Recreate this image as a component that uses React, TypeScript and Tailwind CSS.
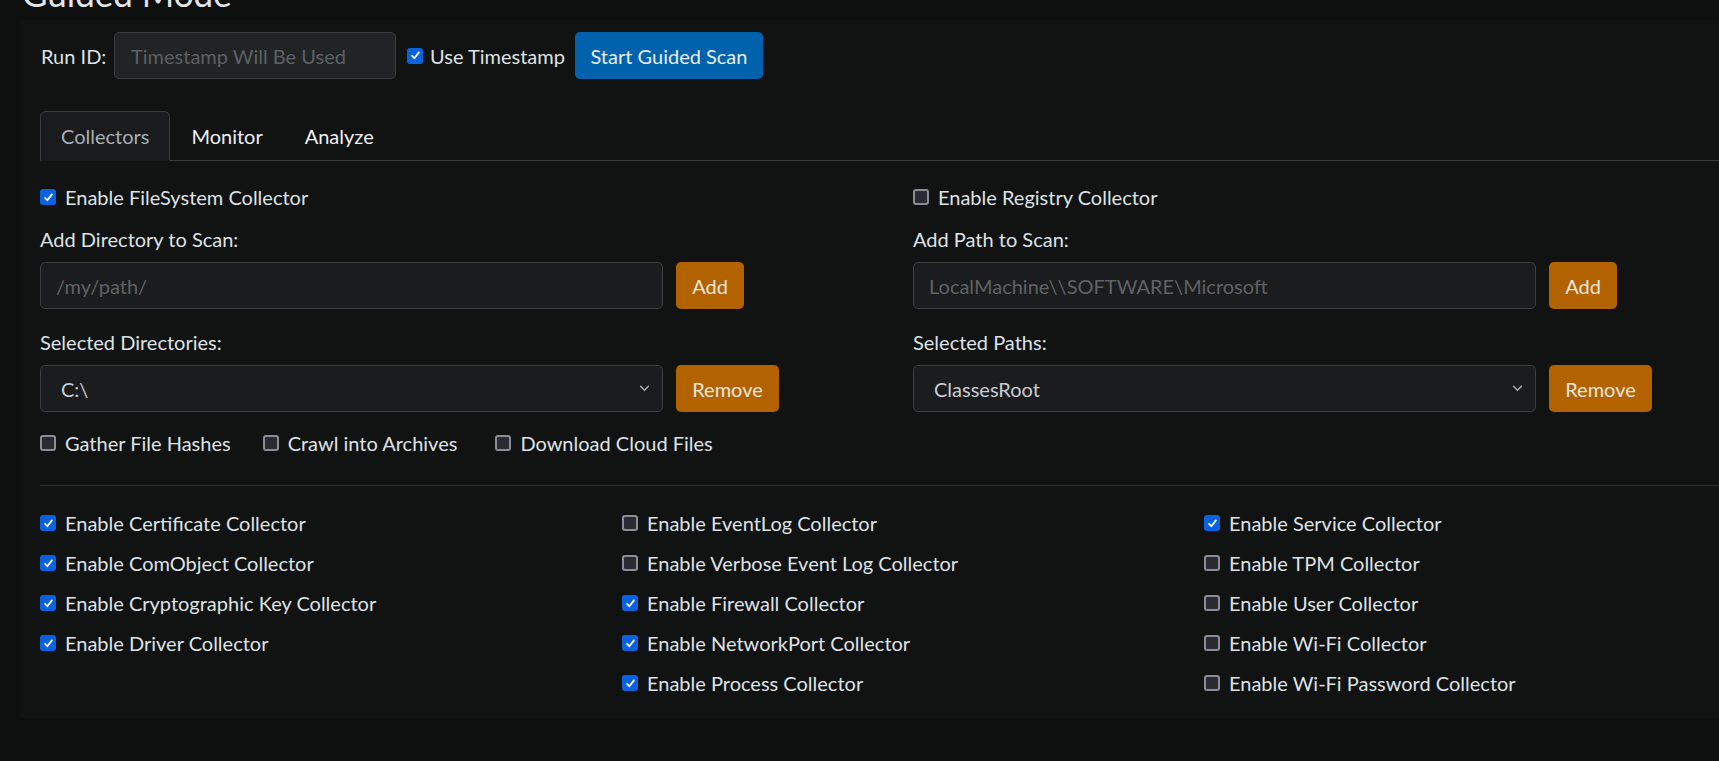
import React from 'react'

const leftCollectors: [string, boolean][] = [
  ['Enable Certificate Collector', true],
  ['Enable ComObject Collector', true],
  ['Enable Cryptographic Key Collector', true],
  ['Enable Driver Collector', true],
]

const midCollectors: [string, boolean][] = [
  ['Enable EventLog Collector', false],
  ['Enable Verbose Event Log Collector', false],
  ['Enable Firewall Collector', true],
  ['Enable NetworkPort Collector', true],
  ['Enable Process Collector', true],
]

const rightCollectors: [string, boolean][] = [
  ['Enable Service Collector', true],
  ['Enable TPM Collector', false],
  ['Enable User Collector', false],
  ['Enable Wi-Fi Collector', false],
  ['Enable Wi-Fi Password Collector', false],
]

function Check({ on }: { on: boolean }) {
  if (on) {
    return (
      <span className="flex h-[16px] w-[16px] shrink-0 items-center justify-center rounded-[3px] bg-[#0b62e0]">
        <svg viewBox="0 0 16 16" className="h-[13px] w-[13px]">
          <path
            d="M3.8 8.4 L6.6 11.4 L12.2 4.2"
            fill="none"
            stroke="#ffffff"
            strokeWidth="2.2"
            strokeLinecap="round"
            strokeLinejoin="round"
          />
        </svg>
      </span>
    )
  }
  return <span className="h-[16px] w-[16px] shrink-0 rounded-[3px] border-2 border-[#8c8c98] bg-[#2b2a33]" />
}

function CheckRow({ label, on }: { label: string; on: boolean }) {
  return (
    <div className="flex h-[30px] items-center gap-[9px]">
      <Check on={on} />
      <span className="whitespace-nowrap">{label}</span>
    </div>
  )
}

function OrangeButton({ children, wide }: { children: React.ReactNode; wide?: boolean }) {
  return (
    <button
      className={
        wide
          ? 'h-[47px] w-[103px] shrink-0 rounded-[5px] bg-[#b36200] text-[20px] text-[#ede6df]'
          : 'h-[47px] w-[68px] shrink-0 rounded-[5px] bg-[#b36200] text-[20px] text-[#ede6df]'
      }
    >
      {children}
    </button>
  )
}

function Chevron() {
  return (
    <svg viewBox="0 0 12 8" className="h-[7px] w-[11px]">
      <path d="M1.5 1.5 L6 6 L10.5 1.5" fill="none" stroke="#aeb2b6" strokeWidth="1.6" strokeLinecap="round" />
    </svg>
  )
}

function ScanColumn({
  enableLabel,
  enabled,
  addLabel,
  placeholder,
  selectedLabel,
  selected,
  children,
}: {
  enableLabel: string
  enabled: boolean
  addLabel: string
  placeholder: string
  selectedLabel: string
  selected: string
  children?: React.ReactNode
}) {
  return (
    <div className="flex flex-col">
      <CheckRow label={enableLabel} on={enabled} />
      <div className="mt-[12px] h-[30px] leading-[30px]">{addLabel}</div>
      <div className="mt-[8px] flex gap-[13px]">
        <input
          placeholder={placeholder}
          className="h-[47px] w-[623px] rounded-[5px] border border-[#3c3f42] bg-[#1b1c1e] px-[15px] text-[20px] outline-none placeholder:text-[#5f6266]"
        />
        <OrangeButton>Add</OrangeButton>
      </div>
      <div className="mt-[18px] h-[30px] leading-[30px]">{selectedLabel}</div>
      <div className="mt-[8px] flex gap-[13px]">
        <div className="flex h-[47px] w-[623px] items-center justify-between rounded-[5px] border border-[#3c3f42] bg-[#1b1c1e] pl-[20px] pr-[12px] text-[#c9cdd1]">
          <span>{selected}</span>
          <Chevron />
        </div>
        <OrangeButton wide>Remove</OrangeButton>
      </div>
      {children}
    </div>
  )
}

export default function App() {
  return (
    <div className="h-[761px] w-full overflow-hidden bg-[#0e0f0f] font-['Lato','Noto_Sans',sans-serif] text-[20px] leading-[1.5] text-[#dee2e6]">
      <div className="flex h-[20px] px-[22px]">
        <h2 className="-mt-[28px] text-[35px] leading-[1.2] text-[#e4e7ea]">Guided Mode</h2>
      </div>

      <div className="ml-[20px] w-[1786px] bg-[#111212] px-[20px] pb-[20px] pt-[12px]">
        <div className="flex h-[47px] items-center">
          <span className="w-[74px] pl-px">Run ID:</span>
          <input
            placeholder="Timestamp Will Be Used"
            className="h-[47px] w-[282px] rounded-[5px] border border-[#3a3d40] bg-[#212425] px-[16px] text-[20px] outline-none placeholder:text-[#5c6064]"
          />
          <span className="ml-[11px]">
            <Check on />
          </span>
          <span className="ml-[7px]">Use Timestamp</span>
          <button className="ml-[10px] h-[47px] w-[188px] rounded-[5px] bg-[#0061ad] text-[20px] text-[#e8eef4]">
            Start Guided Scan
          </button>
        </div>

        <div className="mt-[32px] flex border-b border-[#3b3e41]">
          <div className="-mb-px flex h-[50px] items-center rounded-t-[6px] border border-[#3b3e41] border-b-[#1a1b1d] bg-[#1a1b1d] px-[20px] text-[#a9aeb3]">
            Collectors
          </div>
          <div className="flex h-[49px] items-center border border-transparent px-[20px] text-[#eef0f2]">Monitor</div>
          <div className="flex h-[49px] items-center border border-transparent px-[20px] text-[#eef0f2]">Analyze</div>
        </div>

        <div className="mt-[21px] grid grid-cols-[873px_873px]">
          <ScanColumn
            enableLabel="Enable FileSystem Collector"
            enabled
            addLabel="Add Directory to Scan:"
            placeholder="/my/path/"
            selectedLabel="Selected Directories:"
            selected="C:\"
          >
            <div className="mt-[16px] flex">
              <CheckRow label="Gather File Hashes" on={false} />
              <div className="ml-[32px]">
                <CheckRow label="Crawl into Archives" on={false} />
              </div>
              <div className="ml-[38px]">
                <CheckRow label="Download Cloud Files" on={false} />
              </div>
            </div>
          </ScanColumn>
          <ScanColumn
            enableLabel="Enable Registry Collector"
            enabled={false}
            addLabel="Add Path to Scan:"
            placeholder="LocalMachine\\SOFTWARE\Microsoft"
            selectedLabel="Selected Paths:"
            selected="ClassesRoot"
          />
        </div>

        <div className="mt-[27px] h-px bg-[#2b2d2f]" />

        <div className="mt-[22px] grid grid-cols-[582px_582px_582px]">
          {[leftCollectors, midCollectors, rightCollectors].map((col, i) => (
            <div key={i} className="flex flex-col gap-[10px]">
              {col.map(([label, on]) => (
                <CheckRow key={label} label={label} on={on} />
              ))}
            </div>
          ))}
        </div>
      </div>
    </div>
  )
}
